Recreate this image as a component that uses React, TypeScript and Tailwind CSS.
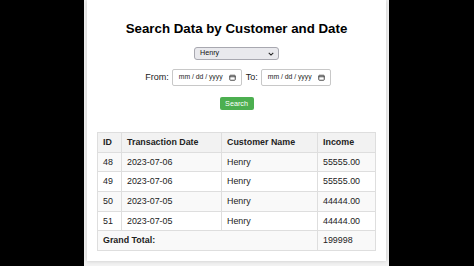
import { FC } from "react";

type Row = { id: number; date: string; name: string; income: string };

const rows: Row[] = [
  { id: 48, date: "2023-07-06", name: "Henry", income: "55555.00" },
  { id: 49, date: "2023-07-06", name: "Henry", income: "55555.00" },
  { id: 50, date: "2023-07-05", name: "Henry", income: "44444.00" },
  { id: 51, date: "2023-07-05", name: "Henry", income: "44444.00" },
];

const CalendarIcon: FC = () => (
  <svg width="7" height="7" viewBox="0 0 14 14" fill="none" stroke="#222" strokeWidth="1.6">
    <rect x="1.5" y="2.5" width="11" height="10" rx="1.5" />
    <line x1="1.5" y1="5.5" x2="12.5" y2="5.5" />
  </svg>
);

const DateBox: FC = () => (
  <div className="flex items-center justify-between w-[70px] h-[17px] pl-[6px] pr-[5px] bg-white border border-[#c8c8c8] rounded-[2px]">
    <span className="text-[6.8px] text-[#222]">mm / dd / yyyy</span>
    <CalendarIcon />
  </div>
);

const cell = "border border-[#dedede] px-[5px] py-[4px] leading-[10.67px] text-left";

export default function App() {
  return (
    <div className="flex h-screen w-full bg-black font-['Liberation_Sans',Arial,sans-serif]">
      <div className="w-[84px] shrink-0 bg-black" />
      <div className="w-[305px] shrink-0 bg-[#f2f2f2] px-[3px]">
        <div className="h-[261px] bg-white shadow-[0_0_4px_rgba(0,0,0,0.18)] flex flex-col items-center">
          <h2 className="mt-[21px] text-[13.3px] leading-[16px] font-bold text-black">
            Search Data by Customer and Date
          </h2>

          <div className="mt-[10px] flex items-center justify-between w-[85px] h-[13px] pl-[5px] pr-[4px] bg-[#e9e9ed] border border-[#a8a8b0] rounded-[3px]">
            <span className="text-[7.2px] text-[#111]">Henry</span>
            <svg width="6" height="4" viewBox="0 0 8 5" fill="none" stroke="#222" strokeWidth="1.4">
              <path d="M1 1l3 3 3-3" />
            </svg>
          </div>

          <div className="mt-[9px] ml-[3px] flex items-center gap-[2px] text-[9px] text-[#222]">
            <span className="mr-[1px]">From:</span>
            <DateBox />
            <span className="ml-[2px] mr-[1px]">To:</span>
            <DateBox />
          </div>

          <button className="mt-[11px] w-[34px] h-[13px] bg-[#4caf50] text-white text-[7.2px] rounded-[2px] leading-none">
            Search
          </button>

          <table className="mt-[22px] w-[278px] table-fixed border-collapse text-[8.9px] text-[#222]">
            <colgroup>
              <col className="w-[24px]" />
              <col className="w-[100px]" />
              <col className="w-[96px]" />
              <col className="w-[58px]" />
            </colgroup>
            <tbody>
              <tr className="bg-[#f2f2f2] font-bold">
                <th className={cell}>ID</th>
                <th className={cell}>Transaction Date</th>
                <th className={cell}>Customer Name</th>
                <th className={cell}>Income</th>
              </tr>
              {rows.map((r, i) => (
                <tr key={r.id} className={i % 2 === 0 ? "bg-[#f9f9f9]" : "bg-white"}>
                  <td className={cell}>{r.id}</td>
                  <td className={cell}>{r.date}</td>
                  <td className={cell}>{r.name}</td>
                  <td className={cell}>{r.income}</td>
                </tr>
              ))}
              <tr className="bg-[#f9f9f9]">
                <td className={cell + " font-bold"} colSpan={3}>
                  Grand Total:
                </td>
                <td className={cell}>199998</td>
              </tr>
            </tbody>
          </table>
        </div>
      </div>
      <div className="flex-1 bg-black" />
    </div>
  );
}
